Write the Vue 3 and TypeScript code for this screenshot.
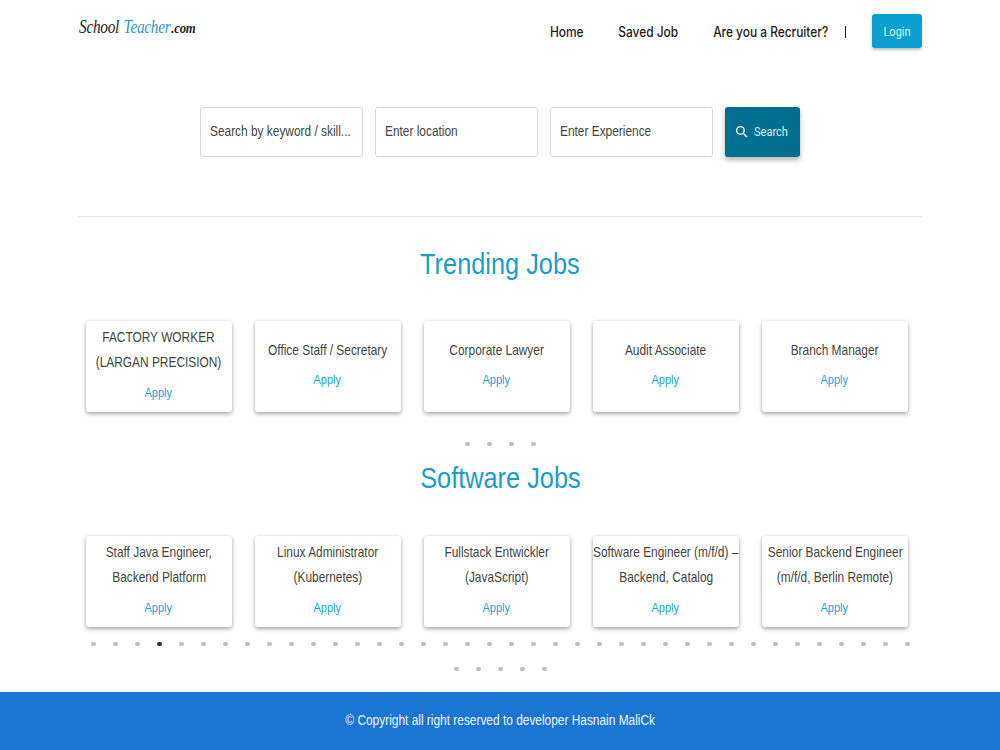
<script setup lang="ts">
const trending: string[][] = [
  ['FACTORY WORKER', '(LARGAN PRECISION)'],
  ['Office Staff / Secretary'],
  ['Corporate Lawyer'],
  ['Audit Associate'],
  ['Branch Manager'],
]
const software: string[][] = [
  ['Staff Java Engineer,', 'Backend Platform'],
  ['Linux Administrator', '(Kubernetes)'],
  ['Fullstack Entwickler', '(JavaScript)'],
  ['Software Engineer (m/f/d) –', 'Backend, Catalog'],
  ['Senior Backend Engineer', '(m/f/d, Berlin Remote)'],
]
const softwareDots: number[] = Array.from({ length: 43 }, (_, i) => i)
</script>

<template>
  <div class="page">
    <div class="wrap">
      <header class="top">
        <div class="logo"><span class="l1">School</span> <span class="l2">Teacher</span><span class="l3">.com</span></div>
        <nav class="nav">
          <a class="nav-link w1"><span class="t">Home</span></a>
          <a class="nav-link w2"><span class="t">Saved Job</span></a>
          <a class="nav-link w3"><span class="t">Are you a Recruiter?</span></a>
          <span class="sep"></span>
          <button class="login"><span class="t">Login</span></button>
        </nav>
      </header>

      <section class="search">
        <div class="field"><span class="t left">Search by keyword / skill...</span></div>
        <div class="field"><span class="t left">Enter location</span></div>
        <div class="field"><span class="t left">Enter Experience</span></div>
        <button class="go">
          <svg width="13" height="13" viewBox="0 0 24 24" fill="none" stroke="#fff" stroke-width="2.6">
            <circle cx="10" cy="10" r="7" />
            <path d="M15 15l7 7" />
          </svg>
          <span class="go-label"><span class="t">Search</span></span>
        </button>
      </section>

      <hr class="rule" />

      <h2 class="heading first"><span class="t">Trending Jobs</span></h2>
      <div class="cards">
        <div v-for="j in trending" :key="j[0]" class="card">
          <div class="title">
            <div v-for="line in j" :key="line" class="line"><span class="t">{{ line }}</span></div>
          </div>
          <a class="apply"><span class="t">Apply</span></a>
        </div>
      </div>
      <div class="dots d1">
        <i v-for="n in 4" :key="n" class="dot"></i>
      </div>

      <h2 class="heading second"><span class="t">Software Jobs</span></h2>
      <div class="cards">
        <div v-for="j in software" :key="j[0]" class="card">
          <div class="title">
            <div v-for="line in j" :key="line" class="line"><span class="t">{{ line }}</span></div>
          </div>
          <a class="apply"><span class="t">Apply</span></a>
        </div>
      </div>
      <div class="dots d2">
        <i v-for="n in softwareDots" :key="n" class="dot" :class="{ on: n === 3 }"></i>
      </div>
    </div>

    <footer class="foot"><span class="t">© Copyright all right reserved to developer Hasnain MaliCk</span></footer>
  </div>
</template>

<style>
html, body { margin: 0; background: #fff; }
</style>

<style scoped>
.page {
  width: 1000px;
  height: 750px;
  overflow: hidden;
  display: flex;
  flex-direction: column;
  font-family: "Liberation Sans", Arial, sans-serif;
  color: #444;
}
.wrap { width: 844px; margin: 0 auto; flex: 1; min-height: 0; }
.t {
  display: inline-block;
  white-space: nowrap;
  transform: scaleX(.85);
}
.t.left { transform-origin: left center; }
.top {
  height: 62px;
  display: flex;
  justify-content: space-between;
  align-items: flex-start;
}
.logo {
  margin: 13px 0 0 1px;
  font-family: "Liberation Serif", serif;
  font-style: italic;
  font-size: 18px;
  line-height: 28px;
  letter-spacing: -0.3px;
  color: #222;
  white-space: nowrap;
  transform: scaleX(.85);
  transform-origin: left center;
}
.l2 { color: #2b9cc9; margin-left: 1px; }
.l3 { font-size: 15px; font-weight: 700; margin-left: 1px; }
.nav { display: flex; align-items: center; height: 34px; margin-top: 14px; }
.nav-link {
  display: flex;
  justify-content: center;
  font-family: Inter, Roboto, sans-serif;
  font-size: 14px;
  font-weight: 500;
  color: #1c1c1c;
  margin-top: 1px;
  white-space: nowrap;
}
.w1 { width: 34px; margin-right: 35px; }
.w2 { width: 59px; margin-right: 35px; }
.w3 { width: 115px; margin-right: 17px; }
.sep { width: 1px; height: 12px; margin-top: 2px; background: #222; margin-right: 26px; }
.login {
  width: 50px;
  height: 34px;
  border: 0;
  border-radius: 3px;
  background: #0b9fd0;
  color: #dff3fb;
  font-family: Roboto, sans-serif;
  font-size: 13px;
  padding: 0;
  box-shadow: 0 2px 3px rgba(0, 0, 0, .25);
}
.search {
  display: flex;
  justify-content: center;
  gap: 12px;
  margin-top: 45px;
}
.field {
  width: 163px;
  height: 50px;
  box-sizing: border-box;
  border: 1px solid #d8d8d8;
  border-radius: 3px;
  padding: 0 0 2px 9px;
  display: flex;
  align-items: center;
  font-size: 14.5px;
  color: #444;
}
.field .t, .title .t { transform: scaleX(.82); }
.go {
  width: 75px;
  height: 50px;
  border: 0;
  border-radius: 3px;
  background: #006e8f;
  color: #d9eef5;
  font-family: Roboto, sans-serif;
  font-size: 13px;
  display: flex;
  align-items: center;
  justify-content: center;
  gap: 6px;
  padding: 0 2px 2px 0;
  box-shadow: 0 3px 5px rgba(0, 0, 0, .3);
}
.go-label { width: 34px; display: flex; justify-content: center; }
.rule { border: 0; border-top: 1px solid #e4e4e4; margin: 59px 0 0; }
.heading {
  margin: 0;
  text-align: center;
  font-weight: 400;
  font-size: 29.8px;
  line-height: 40px;
  color: #1a9dcb;
}
.first { margin-top: 27px; }
.second { margin-top: 1px; }
.cards { display: flex; gap: 22.5px; padding-left: 7.5px; margin-top: 37px; }
.second + .cards { margin-top: 38px; }
.card {
  width: 146.5px;
  height: 91px;
  background: #fff;
  border-radius: 3px;
  box-shadow: 0 2px 4px rgba(0, 0, 0, .32), 0 0 3px rgba(0, 0, 0, .1);
  display: flex;
  flex-direction: column;
  align-items: center;
  justify-content: center;
  text-align: center;
}
.title { font-size: 14.5px; line-height: 25px; color: #444; }
.title:has(.line + .line) { margin-top: -1px; }
.title:has(.line + .line) + .apply { margin-top: 9px; }
.line { display: flex; justify-content: center; width: 146.5px; }
.apply { font-size: 13px; line-height: 18px; margin-top: 8px; margin-bottom: 6px; color: #1fa3d2; }
.dots { display: flex; flex-wrap: wrap; justify-content: center; }
.dot { width: 22px; height: 25px; position: relative; display: block; }
.dot::after {
  content: "";
  position: absolute;
  left: 9.25px;
  top: 9.75px;
  width: 4.5px;
  height: 4.5px;
  border-radius: 50%;
  background: #bdbdbd;
}
.dot.on::after { background: #2e2e2e; }
.d1 { margin-top: 20px; }
.d2 { margin-top: 5px; }
.foot {
  flex: none;
  height: 58px;
  padding-bottom: 2px;
  box-sizing: border-box;
  background: #1976d2;
  color: #eef5fd;
  display: flex;
  align-items: center;
  justify-content: center;
  font-size: 14px;
}
</style>
